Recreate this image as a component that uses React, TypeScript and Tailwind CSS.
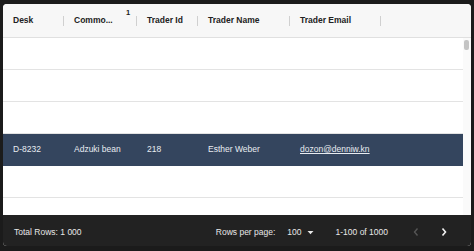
import React from "react";

const cols = [
  { key: "desk", label: "Desk", w: "w-[61px]" },
  { key: "commodity", label: "Commo...", w: "w-[73px]" },
  { key: "traderId", label: "Trader Id", w: "w-[61px]" },
  { key: "traderName", label: "Trader Name", w: "w-[92px]" },
  { key: "traderEmail", label: "Trader Email", w: "w-[91px]" },
];

const rows = [null, null, null, { desk: "D-8232", commodity: "Adzuki bean", traderId: "218", traderName: "Esther Weber", traderEmail: "dozon@denniw.kn" }, null, null];

export default function App() {
  return (
    <div className="w-[474px] h-[251px] bg-[#1b1b1b] pt-[4px] px-[3px] pb-[5px] font-['Liberation_Sans',Arial,sans-serif]">
      <div className="h-full flex flex-col rounded-[4px] overflow-hidden bg-white">
        {/* header */}
        <div className="h-[34px] shrink-0 flex items-center bg-[#f7f7f7] border-b border-[#e0e0e0] text-[8.5px] font-bold text-[#222]">
          {cols.map((c, i) => (
            <div key={c.key} className={`${c.w} h-full relative flex items-center pl-[10px]`}>
              <span>{c.label}</span>
              {i === 1 && (
                <span className="absolute left-[62px] top-[3px] text-[7.5px] font-bold">1</span>
              )}
              <span className="absolute right-0 top-[12px] h-[10px] w-px bg-[#d0d0d0]" />
            </div>
          ))}
        </div>
        {/* body */}
        <div className="flex-1 flex overflow-hidden">
          <div className="flex-1 flex flex-col overflow-hidden">
            {rows.map((r, i) => (
              <div
                key={i}
                className={`h-[32px] shrink-0 flex items-center border-b text-[8.5px] ${
                  r ? "bg-[#34455e] border-[#34455e] text-[#e8ecf1]" : "bg-white border-[#e3e3e3]"
                }`}
              >
                {r &&
                  cols.map((c) => (
                    <div key={c.key} className={`${c.w} pl-[10px] whitespace-nowrap`}>
                      {c.key === "traderEmail" ? (
                        <span className="underline">{r[c.key as keyof typeof r]}</span>
                      ) : (
                        r[c.key as keyof typeof r]
                      )}
                    </div>
                  ))}
              </div>
            ))}
          </div>
          <div className="w-[8px] shrink-0 bg-[#fafafa] pt-[2px] pl-[1px]">
            <div className="w-[5px] h-[10px] rounded-[2px] bg-[#c4c4c4]" />
          </div>
        </div>
        {/* footer */}
        <div className="h-[31px] shrink-0 flex items-center bg-[#222222] text-[#e8e8e8] text-[8.5px] pl-[11px] pr-[23px] pt-[3px]">
          <span>Total Rows: 1 000</span>
          <div className="flex-1" />
          <span>Rows per page:</span>
          <span className="ml-[12px]">100</span>
          <svg className="ml-[5px]" width="7" height="5" viewBox="0 0 7 5">
            <path d="M0.5 1h6L3.5 4.2z" fill="#e8e8e8" />
          </svg>
          <span className="ml-[22px]">1-100 of 1000</span>
          <svg className="ml-[24px]" width="8" height="10" viewBox="0 0 8 10">
            <path d="M5.5 1.5L2.5 5l3 3.5" stroke="#555" strokeWidth="1.4" fill="none" />
          </svg>
          <svg className="ml-[20px]" width="8" height="10" viewBox="0 0 8 10">
            <path d="M2.5 1.5L5.5 5l-3 3.5" stroke="#f2f2f2" strokeWidth="1.6" fill="none" />
          </svg>
        </div>
      </div>
    </div>
  );
}
